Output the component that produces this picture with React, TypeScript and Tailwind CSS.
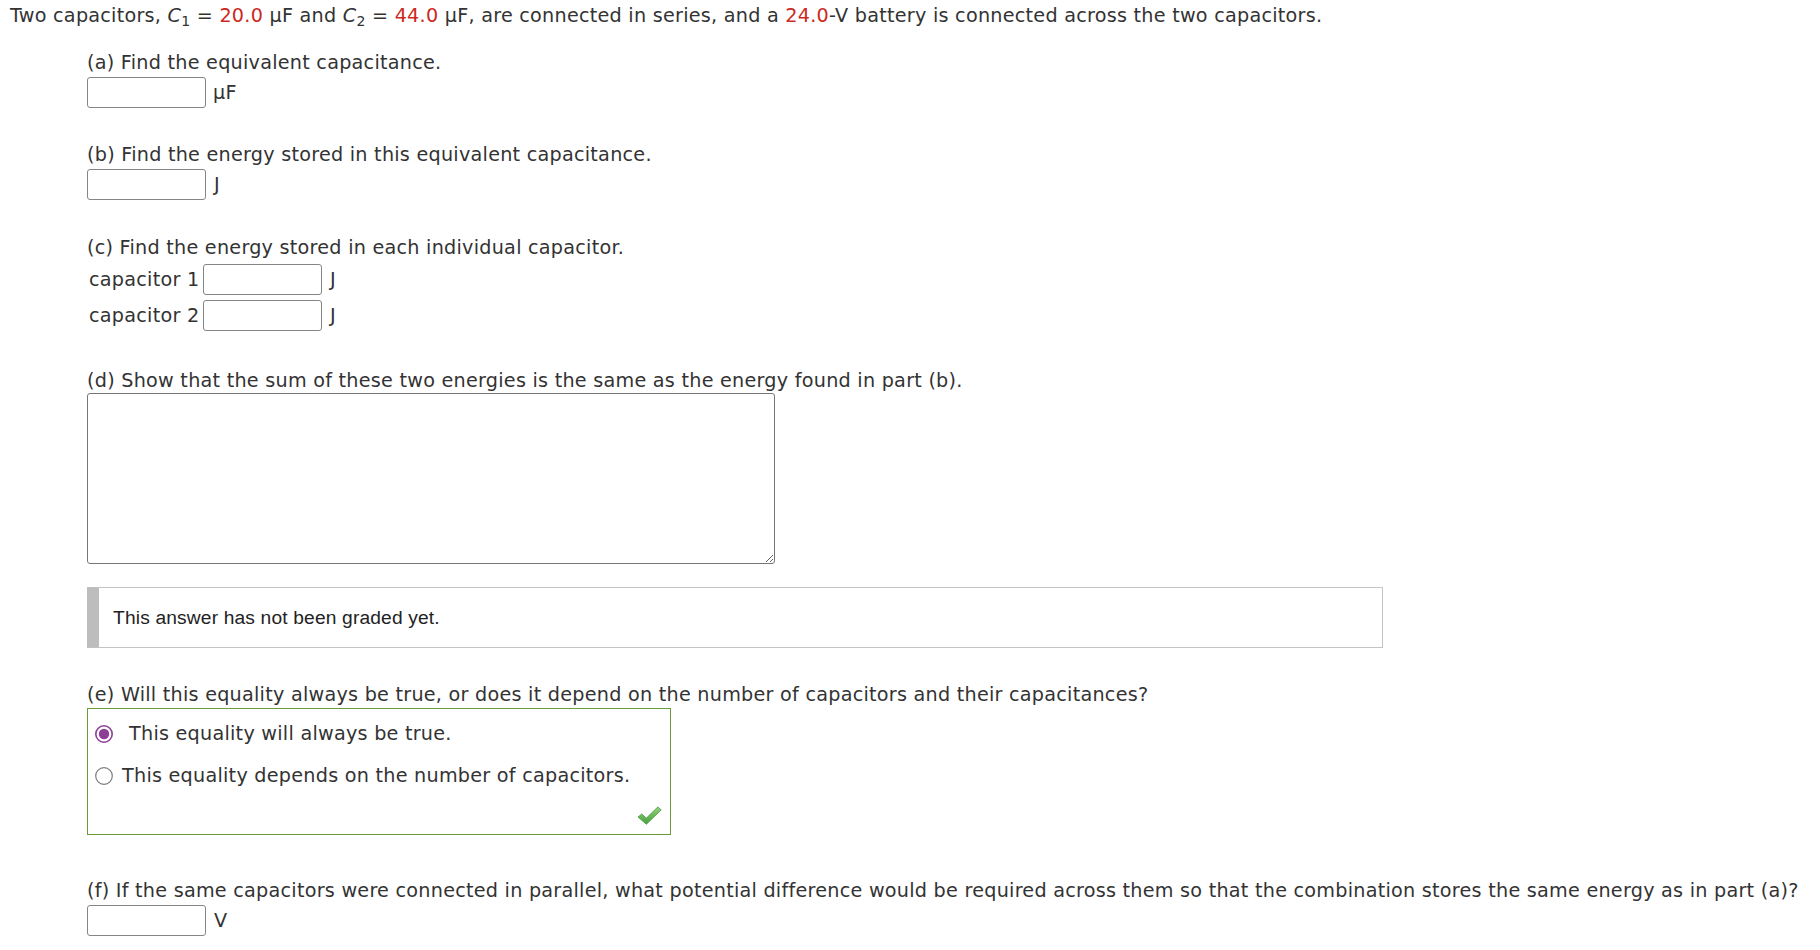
import React from "react";

const RED = "text-[#cc2a1f]";

function Blank({ className = "" }: { className?: string }) {
  return (
    <input
      type="text"
      className={`h-[31px] w-[119px] rounded-[3px] border border-[#858585] bg-white px-1 outline-none ${className}`}
    />
  );
}

function Sub({ children }: { children: React.ReactNode }) {
  return <sub className="text-[14px] leading-none">{children}</sub>;
}

function RadioOn() {
  return (
    <svg width="18" height="18" viewBox="0 0 18 18" className="shrink-0">
      <circle cx="9" cy="9" r="8.2" fill="white" stroke="#8c3f97" strokeWidth="1.6" />
      <circle cx="9" cy="9" r="5.2" fill="#8c3f97" />
    </svg>
  );
}

function RadioOff() {
  return (
    <svg width="18" height="18" viewBox="0 0 18 18" className="shrink-0">
      <circle cx="9" cy="9" r="8.3" fill="white" stroke="#7a7a7a" strokeWidth="1.2" />
    </svg>
  );
}

function Check() {
  return (
    <svg width="25" height="19" viewBox="0 0 24 18">
      <defs>
        <linearGradient id="chk" x1="0" y1="0" x2="0" y2="1">
          <stop offset="0" stopColor="#92d47c" />
          <stop offset="1" stopColor="#46a03e" />
        </linearGradient>
      </defs>
      <path
        d="M1 10.5 L4.5 7.5 L9 11.5 L20 0.8 L23.2 3.6 L9 17.4 Z"
        fill="url(#chk)"
        stroke="#4e9a44"
        strokeWidth="0.8"
        strokeLinejoin="round"
      />
    </svg>
  );
}

export default function App() {
  return (
    <div className="min-h-screen bg-white pl-[10px] pt-[4px] font-['DejaVu_Sans',Verdana,sans-serif] text-[19.2px] leading-[23px] tracking-[0.25px] text-[#333] whitespace-nowrap">
      <p>
        Two capacitors, <i>C</i>
        <Sub>1</Sub> = <span className={RED}>20.0</span> μF and <i>C</i>
        <Sub>2</Sub> = <span className={RED}>44.0</span> μF, are connected in series, and a{" "}
        <span className={RED}>24.0</span>-V battery is connected across the two capacitors.
      </p>

      <div className="ml-[77px]">
        {/* (a) */}
        <p className="mt-[24px]">(a) Find the equivalent capacitance.</p>
        <div className="mt-[3px] flex items-center">
          <Blank />
          <span className="ml-[7px]">μF</span>
        </div>

        {/* (b) */}
        <p className="mt-[35px]">(b) Find the energy stored in this equivalent capacitance.</p>
        <div className="mt-[3px] flex items-center">
          <Blank />
          <span className="ml-[8px]">J</span>
        </div>

        {/* (c) */}
        <p className="mt-[36px]">(c) Find the energy stored in each individual capacitor.</p>
        <div className="mt-[5px] flex flex-col gap-[5px]">
          <div className="flex items-center">
            <span className="w-[116px] pl-[2px]">capacitor 1</span>
            <Blank />
            <span className="ml-[8px]">J</span>
          </div>
          <div className="flex items-center">
            <span className="w-[116px] pl-[2px]">capacitor 2</span>
            <Blank />
            <span className="ml-[8px]">J</span>
          </div>
        </div>

        {/* (d) */}
        <p className="mt-[38px]">
          (d) Show that the sum of these two energies is the same as the energy found in part (b).
        </p>
        <textarea className="mt-[1px] block h-[171px] w-[688px] rounded-[3px] border border-[#767676] bg-white p-1 outline-none" />

        <div className="mt-[23px] flex h-[61px] w-[1296px] items-center border border-[#c4c4c4] border-l-[12px] border-l-[#bdbdbd] pl-[14px] font-['Liberation_Sans',Arial,sans-serif] tracking-[0.16px] text-[#222]">
          This answer has not been graded yet.
        </div>

        {/* (e) */}
        <p className="mt-[35px]">
          (e) Will this equality always be true, or does it depend on the number of capacitors and their capacitances?
        </p>
        <div className="relative mt-[2px] h-[127px] w-[584px] border border-[#6a9c3a] pl-[7px] pt-[13px]">
          <div className="flex items-center">
            <RadioOn />
            <span className="ml-[16px]">This equality will always be true.</span>
          </div>
          <div className="mt-[19px] flex items-center">
            <RadioOff />
            <span className="ml-[9px]">This equality depends on the number of capacitors.</span>
          </div>
          <div className="absolute bottom-[9px] right-[8px]">
            <Check />
          </div>
        </div>

        {/* (f) */}
        <p className="mt-[44px]">
          (f) If the same capacitors were connected in parallel, what potential difference would be required across them so that the combination stores the same energy as in part (a)?
        </p>
        <div className="mt-[3px] flex items-center">
          <Blank />
          <span className="ml-[8px]">V</span>
        </div>
      </div>
    </div>
  );
}
